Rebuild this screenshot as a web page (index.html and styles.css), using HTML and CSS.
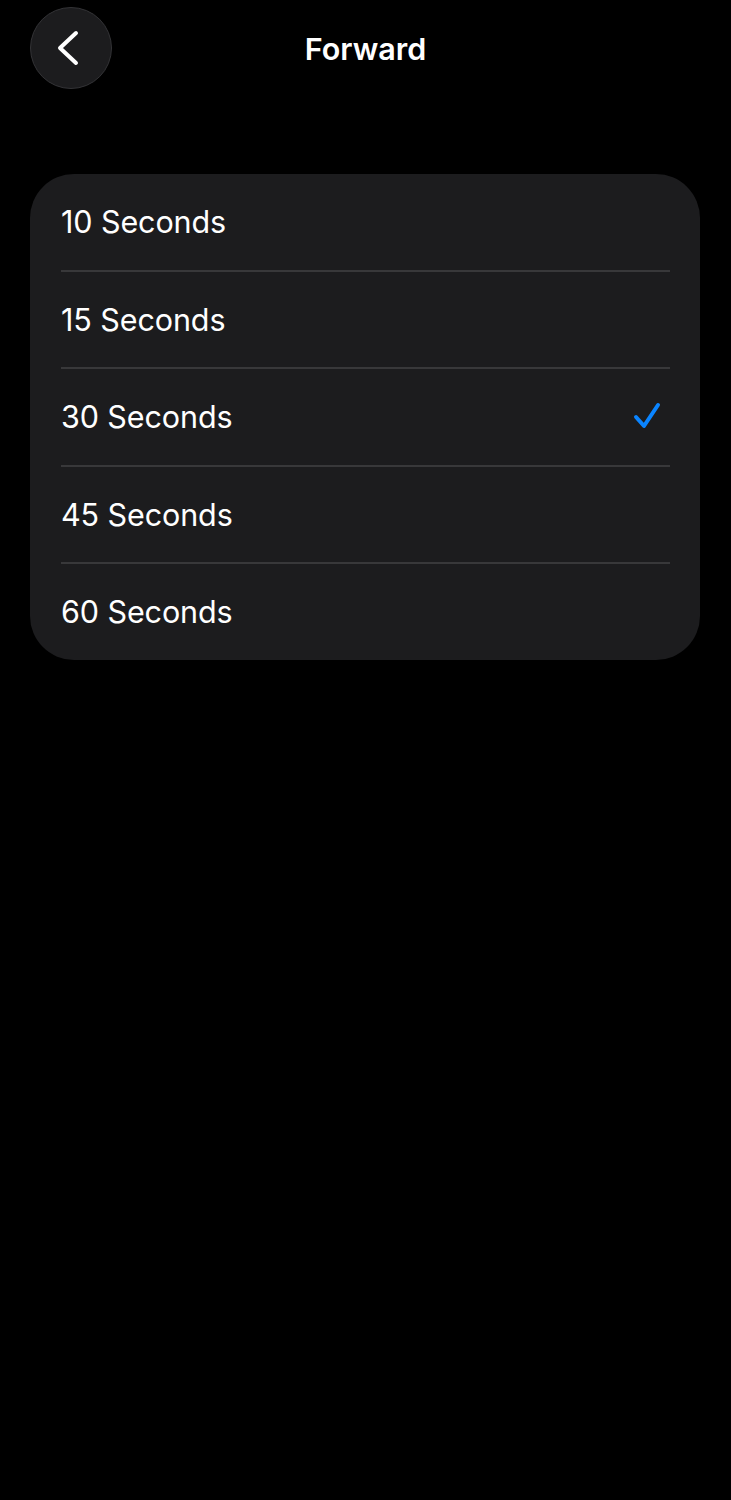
FILE: index.html
```html
<!DOCTYPE html>
<html lang="en">
<head>
  <meta charset="UTF-8">
  <title>Forward</title>
  <link rel="stylesheet" href="styles.css">
</head>
<body>

  <header class="nav">
    <button class="back" aria-label="Back">
      <svg width="40" height="40" viewBox="0 0 40 40">
        <path d="M27 5 L11 20 L27 35" fill="none" stroke="#fff" stroke-width="4" stroke-linecap="round" stroke-linejoin="round"/>
      </svg>
    </button>
    <h1>Forward</h1>
  </header>

  <ul class="options">
    <li><span>10 Seconds</span></li>
    <li><span>15 Seconds</span></li>
    <li class="selected">
      <span>30 Seconds</span>
      <svg class="check" width="32" height="32" viewBox="0 0 32 32">
        <path d="M4 16 L12 25 L26 4" fill="none" stroke="#0a84ff" stroke-width="4" stroke-linecap="round" stroke-linejoin="round"/>
      </svg>
    </li>
    <li><span>45 Seconds</span></li>
    <li><span>60 Seconds</span></li>
  </ul>

</body>
</html>
```

FILE: styles.css
```css
body {
  margin: 0;
  background-color: #000;
  color: #fff;
  font-family: Inter, "Noto Sans", sans-serif;
}

.nav {
  position: relative;
  height: 96px;
  display: flex;
  align-items: center;
  justify-content: center;
}

.nav h1 {
  margin: 0;
  font-size: 30.5px;
  font-weight: 600;
}

.back {
  position: absolute;
  left: 30px;
  top: 7px;
  width: 82px;
  height: 82px;
  border-radius: 50%;
  background-color: #1c1c1e;
  border: 1px solid #333336;
  display: flex;
  align-items: center;
  justify-content: center;
  padding: 0 4px 0 0;
}

.options {
  list-style: none;
  margin: 78px 31px 0 30px;
  padding: 0 30px 0 31px;
  background-color: #1c1c1e;
  border-radius: 44px;
}

.options li {
  height: 95.5px;
  display: flex;
  align-items: center;
  justify-content: space-between;
  font-size: 30.5px;
  letter-spacing: -0.1px;
}

.options li + li {
  border-top: 2px solid #38383a;
}

.check {
  margin-right: 6px;
}
```
